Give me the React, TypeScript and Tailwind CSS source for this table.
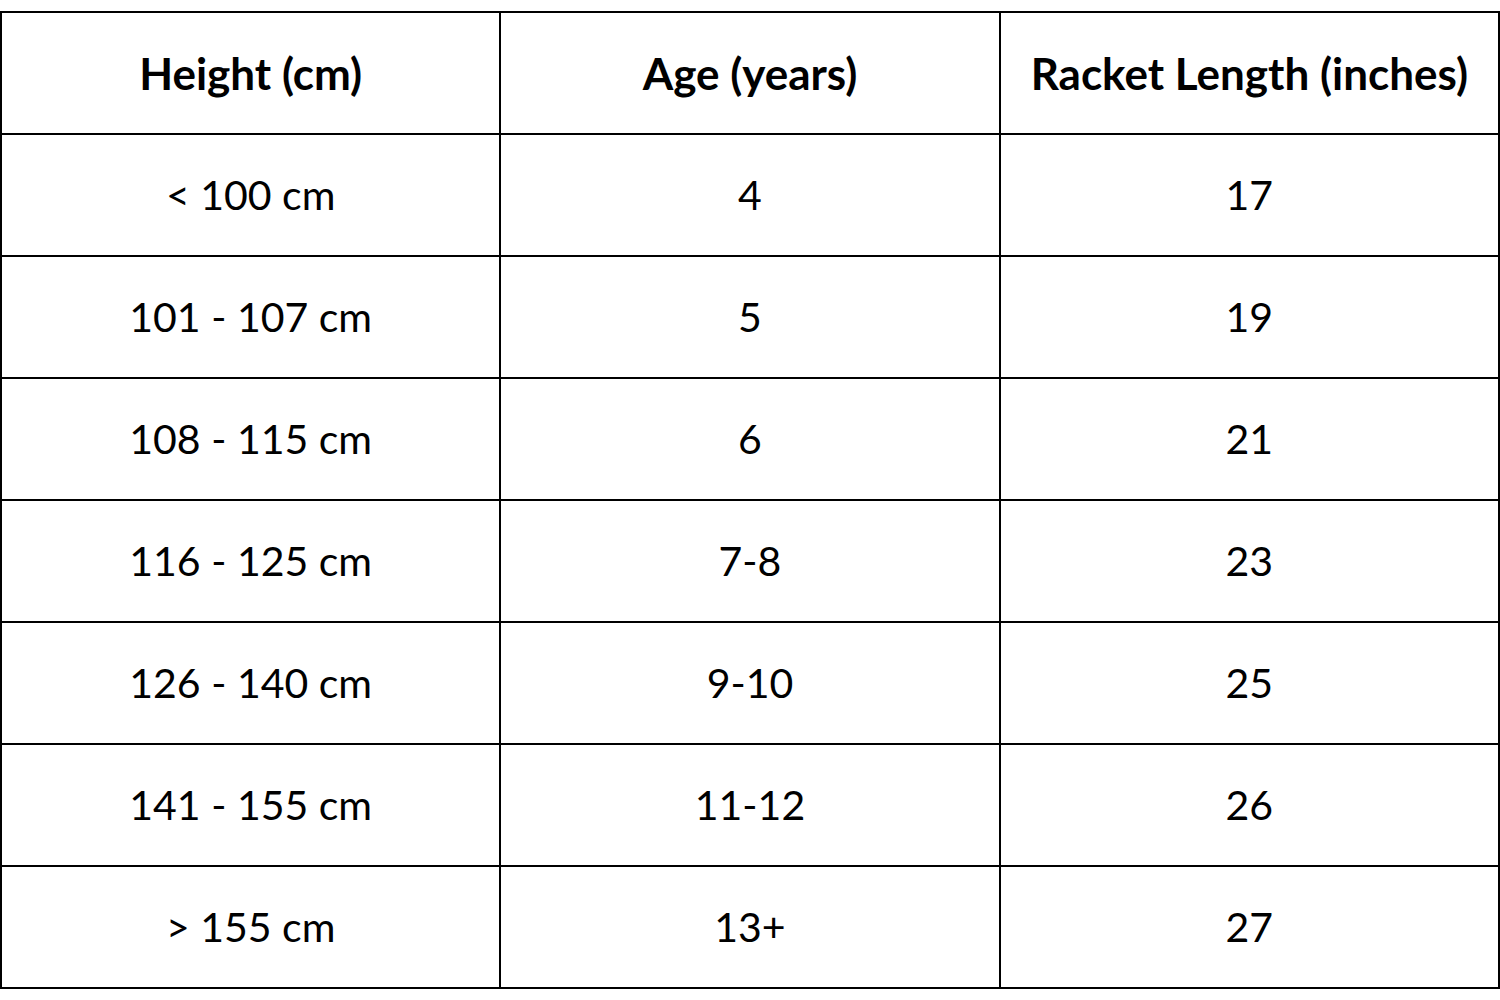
import React from 'react';

const rows = [
  ['< 100 cm', '4', '17'],
  ['101 - 107 cm', '5', '19'],
  ['108 - 115 cm', '6', '21'],
  ['116 - 125 cm', '7-8', '23'],
  ['126 - 140 cm', '9-10', '25'],
  ['141 - 155 cm', '11-12', '26'],
  ['> 155 cm', '13+', '27'],
];

const headers = ['Height (cm)', 'Age (years)', 'Racket Length (inches)'];

const App = () => {
  return (
    <div className="w-[1500px] h-[1000px] bg-white pt-[11px]" style={{ fontFamily: 'Lato, sans-serif' }}>
      <table className="w-[1500px] border-collapse border-2 border-black text-black table-fixed">
        <thead>
          <tr>
            {headers.map((h) => (
              <th key={h} className="h-[122px] border-2 border-black text-center text-[44px] font-bold p-0">
                {h}
              </th>
            ))}
          </tr>
        </thead>
        <tbody>
          {rows.map((row) => (
            <tr key={row[0]}>
              {row.map((cell, i) => (
                <td key={i} className="h-[122px] border-2 border-black text-center text-[41px] p-0">
                  {cell}
                </td>
              ))}
            </tr>
          ))}
        </tbody>
      </table>
    </div>
  );
};

export default App;
